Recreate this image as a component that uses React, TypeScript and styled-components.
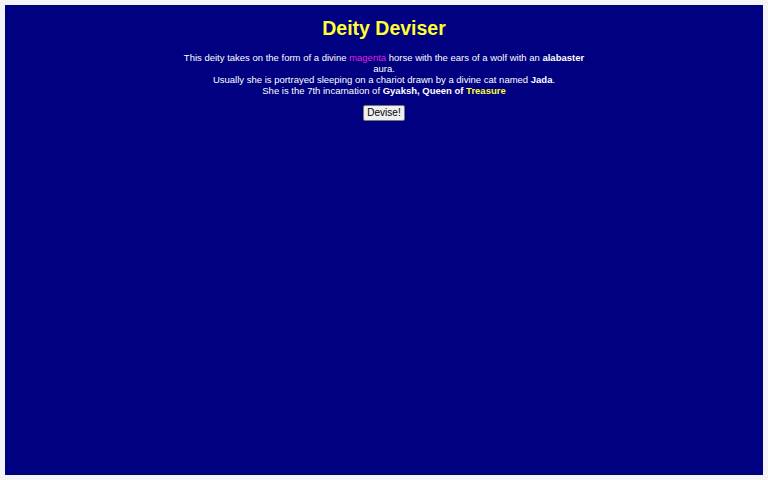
import React from "react";
import styled, { createGlobalStyle } from "styled-components";

const GlobalStyle = createGlobalStyle`
  html, body {
    margin: 0;
    padding: 0;
    background: #f4f4f6;
  }
  body {
    padding: 5px;
    box-sizing: border-box;
    height: 480px;
  }
  #root {
    height: 100%;
  }
`;

const Page = styled.div`
  height: 100%;
  background: #000080;
  color: #ffffff;
  font-family: "Liberation Sans", Arial, sans-serif;
  display: flex;
  flex-direction: column;
  align-items: center;
`;

const Title = styled.h1`
  margin: 11px 0 0;
  font-size: 19.5px;
  line-height: 24px;
  font-weight: bold;
  color: #ffff33;
`;

const Description = styled.div`
  margin-top: 12px;
  width: 410px;
  text-align: center;
  font-size: 9.5px;
  line-height: 11px;
`;

const Colour = styled.span<{ $tint?: string }>`
  color: ${(p) => p.$tint ?? "inherit"};
`;

const Strong = styled.b<{ $tint?: string }>`
  color: ${(p) => p.$tint ?? "#ffffff"};
`;

const DeviseButton = styled.button`
  margin-top: 9px;
  padding: 1px 3px;
  font-family: "Liberation Sans", Arial, sans-serif;
  font-size: 10px;
  line-height: 12px;
  color: #000000;
  background: #efefef;
  border: 1px solid #767676;
  border-radius: 2px;
`;

const App = () => {
  return (
    <>
      <GlobalStyle />
      <Page>
        <Title>Deity Deviser</Title>
        <Description>
          This deity takes on the form of a divine{" "}
          <Colour $tint="#e020e0">magenta</Colour> horse with the ears of a wolf
          with an <Strong>alabaster</Strong> aura.
          <br />
          Usually she is portrayed sleeping on a chariot drawn by a divine cat
          named <Strong>Jada</Strong>.
          <br />
          She is the 7th incarnation of <Strong>Gyaksh, Queen of </Strong>
          <Strong $tint="#ffff33">Treasure</Strong>
        </Description>
        <DeviseButton>Devise!</DeviseButton>
      </Page>
    </>
  );
};

export default App;
